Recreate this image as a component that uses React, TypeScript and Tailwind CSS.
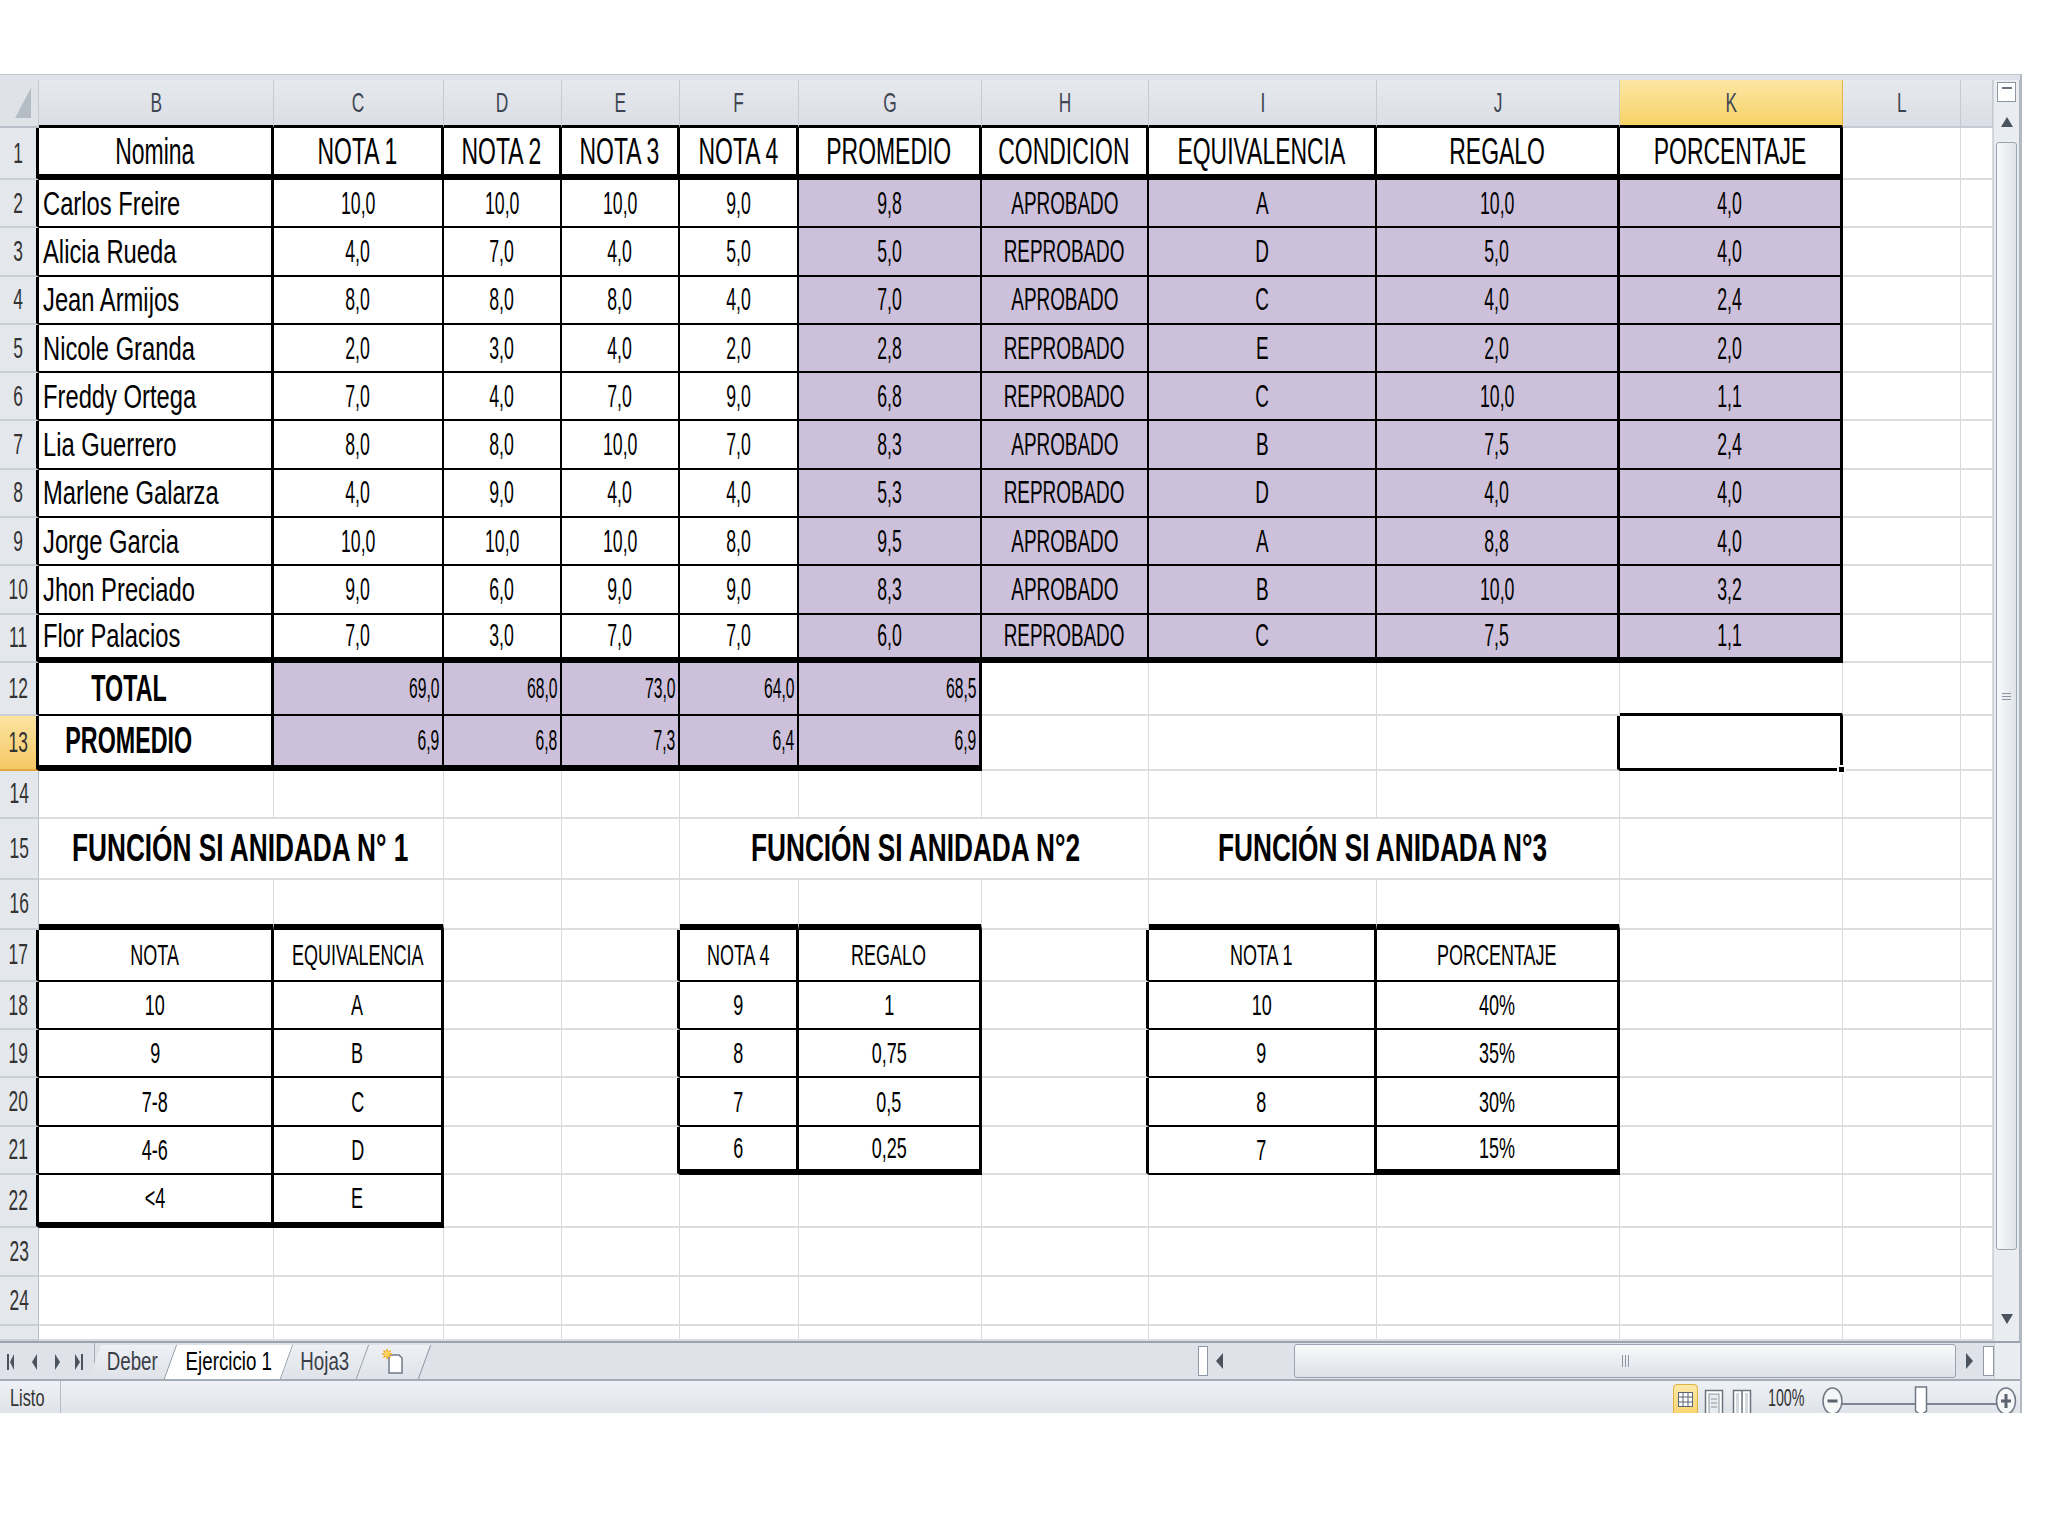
import clsx from 'clsx';

type Kind = 'hdr' | 'name' | 'num' | 'word' | 'label' | 'tot' | 'title' | 'sub';

const header = ['Nomina', 'NOTA 1', 'NOTA 2', 'NOTA 3', 'NOTA 4', 'PROMEDIO', 'CONDICION', 'EQUIVALENCIA', 'REGALO', 'PORCENTAJE'];

const students = [
  ['Carlos Freire', '10,0', '10,0', '10,0', '9,0', '9,8', 'APROBADO', 'A', '10,0', '4,0'],
  ['Alicia Rueda', '4,0', '7,0', '4,0', '5,0', '5,0', 'REPROBADO', 'D', '5,0', '4,0'],
  ['Jean Armijos', '8,0', '8,0', '8,0', '4,0', '7,0', 'APROBADO', 'C', '4,0', '2,4'],
  ['Nicole Granda', '2,0', '3,0', '4,0', '2,0', '2,8', 'REPROBADO', 'E', '2,0', '2,0'],
  ['Freddy Ortega', '7,0', '4,0', '7,0', '9,0', '6,8', 'REPROBADO', 'C', '10,0', '1,1'],
  ['Lia Guerrero', '8,0', '8,0', '10,0', '7,0', '8,3', 'APROBADO', 'B', '7,5', '2,4'],
  ['Marlene Galarza', '4,0', '9,0', '4,0', '4,0', '5,3', 'REPROBADO', 'D', '4,0', '4,0'],
  ['Jorge Garcia', '10,0', '10,0', '10,0', '8,0', '9,5', 'APROBADO', 'A', '8,8', '4,0'],
  ['Jhon Preciado', '9,0', '6,0', '9,0', '9,0', '8,3', 'APROBADO', 'B', '10,0', '3,2'],
  ['Flor Palacios', '7,0', '3,0', '7,0', '7,0', '6,0', 'REPROBADO', 'C', '7,5', '1,1'],
];

const totals = ['69,0', '68,0', '73,0', '64,0', '68,5'];
const avgs = ['6,9', '6,8', '7,3', '6,4', '6,9'];

const sub1 = [['NOTA', 'EQUIVALENCIA'], ['10', 'A'], ['9', 'B'], ['7-8', 'C'], ['4-6', 'D'], ['<4', 'E']];
const sub2 = [['NOTA 4', 'REGALO'], ['9', '1'], ['8', '0,75'], ['7', '0,5'], ['6', '0,25']];
const sub3 = [['NOTA 1', 'PORCENTAJE'], ['10', '40%'], ['9', '35%'], ['8', '30%'], ['7', '15%']];

const letters = ['', 'B', 'C', 'D', 'E', 'F', 'G', 'H', 'I', 'J', 'K', 'L', ''];

const TEXT: Record<Kind, string> = {
  hdr: 'text-[37px] scale-x-[0.62]',
  name: 'text-[33px] scale-x-[0.72] origin-left',
  num: 'text-[31px] scale-x-[0.57]',
  word: 'text-[31px] scale-x-[0.61]',
  label: 'text-[37px] font-bold scale-x-[0.63]',
  tot: 'text-[29px] scale-x-[0.54] origin-right',
  title: 'text-[38px] font-bold scale-x-[0.69] origin-left',
  sub: 'text-[30px] scale-x-[0.6]',
};

// right / bottom cell borders, excel style (line belongs to the cell on its left / above)
const RB: Record<string, string> = {
  g: 'border-r border-r-[#d9dadc]',
  t: 'border-r-2 border-r-black',
  m: 'border-r-[3px] border-r-black',
  n: '',
};
const BB: Record<string, string> = {
  g: 'border-b-2 border-b-[#dcdde0]',
  t: 'border-b-2 border-b-black',
  m: 'border-b-[3px] border-b-black',
  k: 'border-b-[6px] border-b-black',
};

function rightB(r: number, c: number) {
  if (r >= 1 && r <= 11 && c >= 1 && c <= 10) {
    if (r === 1 || c === 1 || c === 9 || c === 10) return 'm';
    return 't';
  }
  if ((r === 12 || r === 13) && c >= 1 && c <= 6) return c === 1 || c === 6 ? 'm' : 't';
  if (r === 13 && (c === 9 || c === 10)) return 'm';
  if (r >= 17 && r <= 22 && (c === 1 || c === 2)) return 'm';
  if (r >= 17 && r <= 21 && [4, 5, 6, 7, 8, 9].includes(c)) return 'm';
  if (r === 15 && (c === 1 || c === 5 || c === 6 || c === 8)) return 'n';
  return 'g';
}

function bottomB(r: number, c: number) {
  const main = c >= 1 && c <= 10;
  if (r === 1 && main) return 'k';
  if (r >= 2 && r <= 10 && main) return 't';
  if (r === 11 && main) return 'k';
  if (r === 12 && c >= 1 && c <= 6) return 't';
  if (r === 13 && c >= 1 && c <= 6) return 'k';
  if ((r === 12 || r === 13) && c === 10) return 'm';
  if (r === 16 && [1, 2, 5, 6, 8, 9].includes(c)) return 'k';
  if (r >= 17 && r <= 21 && (c === 1 || c === 2)) return 't';
  if (r === 22 && (c === 1 || c === 2)) return 'k';
  if (r >= 17 && r <= 20 && [5, 6, 8, 9].includes(c)) return 't';
  if (r === 21 && [5, 6, 9].includes(c)) return 'k';
  if (r === 21 && c === 8) return 't';
  return 'g';
}

function content(r: number, c: number): { text: string; kind: Kind } | null {
  if (r === 1 && c >= 1 && c <= 10) return { text: header[c - 1], kind: 'hdr' };
  if (r >= 2 && r <= 11 && c >= 1 && c <= 10) {
    const kind: Kind = c === 1 ? 'name' : c === 7 || c === 8 ? 'word' : 'num';
    return { text: students[r - 2][c - 1], kind };
  }
  if (r === 12 || r === 13) {
    if (c === 1) return { text: r === 12 ? 'TOTAL' : 'PROMEDIO', kind: 'label' };
    if (c >= 2 && c <= 6) return { text: (r === 12 ? totals : avgs)[c - 2], kind: 'tot' };
  }
  if (r === 15) {
    if (c === 1) return { text: 'FUNCIÓN SI ANIDADA N° 1', kind: 'title' };
    if (c === 5) return { text: 'FUNCIÓN SI ANIDADA N°2', kind: 'title' };
    if (c === 8) return { text: 'FUNCIÓN SI ANIDADA N°3', kind: 'title' };
  }
  if (r >= 17 && r <= 22 && (c === 1 || c === 2)) return { text: sub1[r - 17][c - 1], kind: 'sub' };
  if (r >= 17 && r <= 21 && (c === 5 || c === 6)) return { text: sub2[r - 17][c - 5], kind: 'sub' };
  if (r >= 17 && r <= 21 && (c === 8 || c === 9)) return { text: sub3[r - 17][c - 8], kind: 'sub' };
  return null;
}

function align(kind: Kind, c: number) {
  switch (kind) {
    case 'name':
      return 'justify-start pl-1';
    case 'tot':
      return 'justify-end pr-[3px]';
    case 'label':
      return 'justify-center pr-[52px]';
    case 'title':
      return c === 1 ? 'justify-start pl-[33px]' : c === 5 ? 'justify-start pl-[71px]' : 'justify-start pl-[69px]';
    default:
      return 'justify-center';
  }
}

function ColHead({ c }: { c: number }) {
  if (c === 0) {
    return (
      <div className="bg-[#dfe3e8] border-r border-r-[#c3c9d1] border-b-2 border-b-[#b8bfc8] flex items-end justify-end pr-[7px] pb-[8px]">
        <svg width="16" height="30" viewBox="0 0 16 30">
          <polygon points="16,0 16,30 0,30" fill="#b4bcc6" />
        </svg>
      </div>
    );
  }
  const sel = c === 10;
  return (
    <div
      className={clsx(
        'flex items-center justify-center overflow-hidden',
        sel
          ? 'bg-linear-to-b from-[#fbe6a2] to-[#f8d266] border-r border-r-[#e2b44a]'
          : 'bg-linear-to-b from-[#e6e9ee] to-[#dbdfe5] border-r border-r-[#c5cbd3]',
        c <= 10 ? 'border-b-[3px] border-b-black' : 'border-b-2 border-b-[#c5cbd3]'
      )}
    >
      <span className="inline-block leading-none text-[28px] scale-x-[0.62] text-[#3f4652]">{letters[c]}</span>
    </div>
  );
}

function RowHead({ r }: { r: number }) {
  const inTable = (r >= 1 && r <= 13) || (r >= 17 && r <= 22);
  const sel = r === 13;
  return (
    <div
      className={clsx(
        'flex items-center justify-center overflow-hidden',
        sel
          ? 'bg-linear-to-b from-[#fbe4a0] to-[#f6c864] border-b-2 border-b-[#e0a73c]'
          : 'bg-[#e4e8ed] border-b-2 border-b-[#c9cfd7]',
        inTable ? 'border-r-[3px] border-r-black' : 'border-r border-r-[#b7bfc9]'
      )}
    >
      {r <= 24 && <span className="inline-block leading-none text-[29px] scale-x-[0.6] text-[#333]">{r}</span>}
    </div>
  );
}

function Cell({ r, c }: { r: number; c: number }) {
  if (r === 0) return <ColHead c={c} />;
  if (c === 0) return <RowHead r={r} />;
  const info = content(r, c);
  const purple = (r >= 2 && r <= 11 && c >= 6 && c <= 10) || ((r === 12 || r === 13) && c >= 2 && c <= 6);
  const selected = r === 13 && c === 10;
  return (
    <div
      className={clsx(
        'flex items-center',
        RB[rightB(r, c)],
        BB[bottomB(r, c)],
        purple && 'bg-[#ccc0da]',
        info && align(info.kind, c),
        selected && 'relative'
      )}
    >
      {info && (
        <span className={clsx('inline-block whitespace-nowrap leading-none', TEXT[info.kind])}>{info.text}</span>
      )}
      {selected && <div className="absolute z-10 -right-[6px] -bottom-[6px] w-[9px] h-[9px] bg-black border-2 border-white" />}
    </div>
  );
}

function Sheet() {
  const cells = [];
  for (let r = 0; r < 26; r++) {
    for (let c = 0; c < 13; c++) cells.push(<Cell key={`${r}-${c}`} r={r} c={c} />);
  }
  return (
    <div className="grid w-[1993px] h-[1261px] grid-cols-[39px_235px_170px_118px_118px_119px_183px_167px_228px_243px_223px_118px_32px] grid-rows-[48px_52px_repeat(10,48.3px)_53px_55px_48px_61px_50px_52px_repeat(4,48.25px)_53px_49px_49px_15px]">
      {cells}
    </div>
  );
}

function VScroll() {
  return (
    <div className="w-[27px] h-[1261px] flex flex-col bg-[#e9ecf0] border-l border-l-[#d0d5dc] border-r border-r-[#a9b1bb]">
      <div className="h-[20px] mx-[3px] mt-[2px] border border-[#8e98a4] bg-white flex justify-center">
        <div className="w-[10px] h-[2px] bg-[#6b7480] mt-[4px]" />
      </div>
      <div className="h-[40px] flex items-center justify-center">
        <svg width="12" height="10" viewBox="0 0 12 10">
          <polygon points="6,0 12,10 0,10" fill="#4b535e" />
        </svg>
      </div>
      <div className="h-[1108px] mx-[2px] rounded-[3px] border border-[#9ca6b2] bg-linear-to-r from-[#f8f9fb] to-[#dfe4ea] flex flex-col items-center justify-center gap-[2px]">
        <div className="w-[9px] h-px bg-[#8d96a2]" />
        <div className="w-[9px] h-px bg-[#8d96a2]" />
        <div className="w-[9px] h-px bg-[#8d96a2]" />
      </div>
      <div className="flex-1" />
      <div className="h-[44px] flex items-center justify-center">
        <svg width="12" height="10" viewBox="0 0 12 10">
          <polygon points="0,0 12,0 6,10" fill="#4b535e" />
        </svg>
      </div>
    </div>
  );
}

function Tab({ label, active, width }: { label?: string; active?: boolean; width: string }) {
  return (
    <div
      className={clsx(
        'h-[34px] self-end skew-x-[-20deg] border-r border-r-[#8c96a2] flex items-center justify-center',
        width,
        active ? 'bg-white' : 'bg-linear-to-b from-[#eef0f4] to-[#dfe3e9]'
      )}
    >
      <span className="inline-block skew-x-[20deg]">
        {label ? (
          <span
            className={clsx(
              'inline-block whitespace-nowrap leading-none text-[26px] scale-x-[0.72]',
              active ? 'text-black' : 'text-[#3b4048]'
            )}
          >
            {label}
          </span>
        ) : (
          <svg width="26" height="28" viewBox="0 0 26 28" className="block">
            <path d="M8 7 H18 L21 10 V25 H8 Z" fill="#fff" stroke="#6f7b8a" strokeWidth="1.5" />
            <g stroke="#f2a81d" strokeWidth="1.6">
              <line x1="6" y1="1" x2="6" y2="11" />
              <line x1="1" y1="6" x2="11" y2="6" />
              <line x1="2.5" y1="2.5" x2="9.5" y2="9.5" />
              <line x1="9.5" y1="2.5" x2="2.5" y2="9.5" />
            </g>
            <circle cx="6" cy="6" r="2.6" fill="#fbd35a" />
          </svg>
        )}
      </span>
    </div>
  );
}

function TabBar() {
  return (
    <div className="h-[40px] flex bg-[#dfe3e9] border-t-2 border-t-[#9aa3ae] border-b-2 border-b-[#a4acb6]">
      <div className="w-[94px] flex items-center">
        <svg width="94" height="36" viewBox="0 0 94 36">
          <g fill="#4b535e">
            <rect x="7" y="11" width="2" height="16" />
            <polygon points="14,11 10,19 14,27" />
            <polygon points="37,11 32,19 37,27" />
            <polygon points="55,11 60,19 55,27" />
            <polygon points="75,11 80,19 75,27" />
            <rect x="81" y="11" width="2" height="16" />
          </g>
        </svg>
      </div>
      <div className="flex h-full border-l border-l-[#a4acb6]">
        <Tab label="Deber" width="w-[76px]" />
        <Tab label="Ejercicio 1" active width="w-[116px]" />
        <Tab label="Hoja3" width="w-[76px]" />
        <Tab width="w-[62px]" />
      </div>
      <div className="ml-auto flex h-full">
        <div className="w-[10px] my-[3px] bg-white border border-[#8f99a5]" />
        <div className="w-[86px] flex items-center pl-[8px]">
          <svg width="7" height="16" viewBox="0 0 7 16">
            <polygon points="7,0 0,8 7,16" fill="#4b535e" />
          </svg>
        </div>
        <div className="w-[662px] my-[1px] rounded-[3px] border border-[#9aa4b0] bg-linear-to-b from-[#f8f9fb] to-[#dde2e8] flex items-center justify-center gap-[2px]">
          <div className="w-px h-[12px] bg-[#8d96a2]" />
          <div className="w-px h-[12px] bg-[#8d96a2]" />
          <div className="w-px h-[12px] bg-[#8d96a2]" />
        </div>
        <div className="w-[27px] flex items-center justify-center">
          <svg width="7" height="16" viewBox="0 0 7 16">
            <polygon points="0,0 7,8 0,16" fill="#4b535e" />
          </svg>
        </div>
        <div className="w-[11px] my-[3px] bg-white border border-[#8f99a5]" />
        <div className="w-[26px] bg-[#e9ecf0] border-l border-l-[#c9cfd7]" />
      </div>
    </div>
  );
}

function StatusBar() {
  return (
    <div className="h-[32px] flex overflow-hidden bg-linear-to-b from-[#eef1f5] to-[#e0e4ea]">
      <div className="w-[61px] border-r border-r-[#b5bcc6] pl-[10px] flex items-end pb-[3px]">
        <span className="inline-block origin-left scale-x-[0.68] text-[24px] leading-none text-[#333]">Listo</span>
      </div>
      <div className="flex-1" />
      <div className="flex items-start pr-[3px]">
        <div className="w-[25px] h-[34px] mt-[3px] rounded-t-[4px] border border-[#e0b040] bg-linear-to-b from-[#fde9a8] to-[#f9d36a] flex justify-center pt-[7px]">
          <svg width="15" height="15" viewBox="0 0 15 15">
            <rect x="0.5" y="0.5" width="14" height="14" fill="#fff" stroke="#5a6470" />
            <path d="M5 0 V15 M10 0 V15 M0 5 H15 M0 10 H15" stroke="#5a6470" />
          </svg>
        </div>
        <svg width="20" height="30" viewBox="0 0 20 30" className="ml-[6px] mt-[8px]">
          <rect x="1.5" y="1.5" width="17" height="28" fill="#fff" stroke="#6a737f" strokeWidth="1.5" />
          <rect x="5" y="5" width="10" height="24" fill="#e8ebef" stroke="#8a939e" />
          <path d="M7 10 H13 M7 14 H13 M7 18 H13" stroke="#8a939e" />
        </svg>
        <svg width="20" height="30" viewBox="0 0 20 30" className="ml-[8px] mt-[8px]">
          <rect x="1.5" y="1.5" width="17" height="28" fill="#fff" stroke="#6a737f" strokeWidth="1.5" />
          <path d="M10 1.5 V30" stroke="#6a737f" strokeWidth="1.5" />
          <rect x="4" y="4" width="3" height="26" fill="#d4d9df" />
          <rect x="13" y="4" width="3" height="26" fill="#d4d9df" />
        </svg>
        <div className="w-[42px] ml-[16px] h-[32px] flex items-end pb-[3px]">
          <span className="inline-block origin-left scale-x-[0.62] text-[23px] leading-none text-[#333]">100%</span>
        </div>
        <svg width="195" height="40" viewBox="0 0 195 40" className="ml-[12px]">
          <line x1="20" y1="23" x2="175" y2="23" stroke="#7d8692" strokeWidth="2" />
          <ellipse cx="10.5" cy="20" rx="9.5" ry="13" fill="#f4f6f8" stroke="#6f7884" strokeWidth="1.5" />
          <rect x="5.5" y="18.5" width="10" height="3" fill="#5a636e" />
          <path d="M93.5 6 H104.5 V30 L99 34 L93.5 30 Z" fill="#fff" stroke="#6f7884" strokeWidth="1.5" />
          <ellipse cx="184" cy="20" rx="9.5" ry="13" fill="#f4f6f8" stroke="#6f7884" strokeWidth="1.5" />
          <rect x="179" y="18.5" width="10" height="3" fill="#5a636e" />
          <rect x="182.5" y="13" width="3" height="14" fill="#5a636e" />
        </svg>
      </div>
    </div>
  );
}

export default function App() {
  return (
    <div className="w-[2048px] h-[1536px] bg-white font-['Liberation_Sans',Arial,sans-serif] text-black overflow-hidden">
      <div className="h-[74px]" />
      <div className="w-[2022px] border-r-2 border-r-[#b4bac2]">
        <div className="h-[6px] bg-[#dde2e8] border-t border-t-[#c3c9d1]" />
        <div className="flex">
          <Sheet />
          <VScroll />
        </div>
        <TabBar />
        <StatusBar />
      </div>
    </div>
  );
}
